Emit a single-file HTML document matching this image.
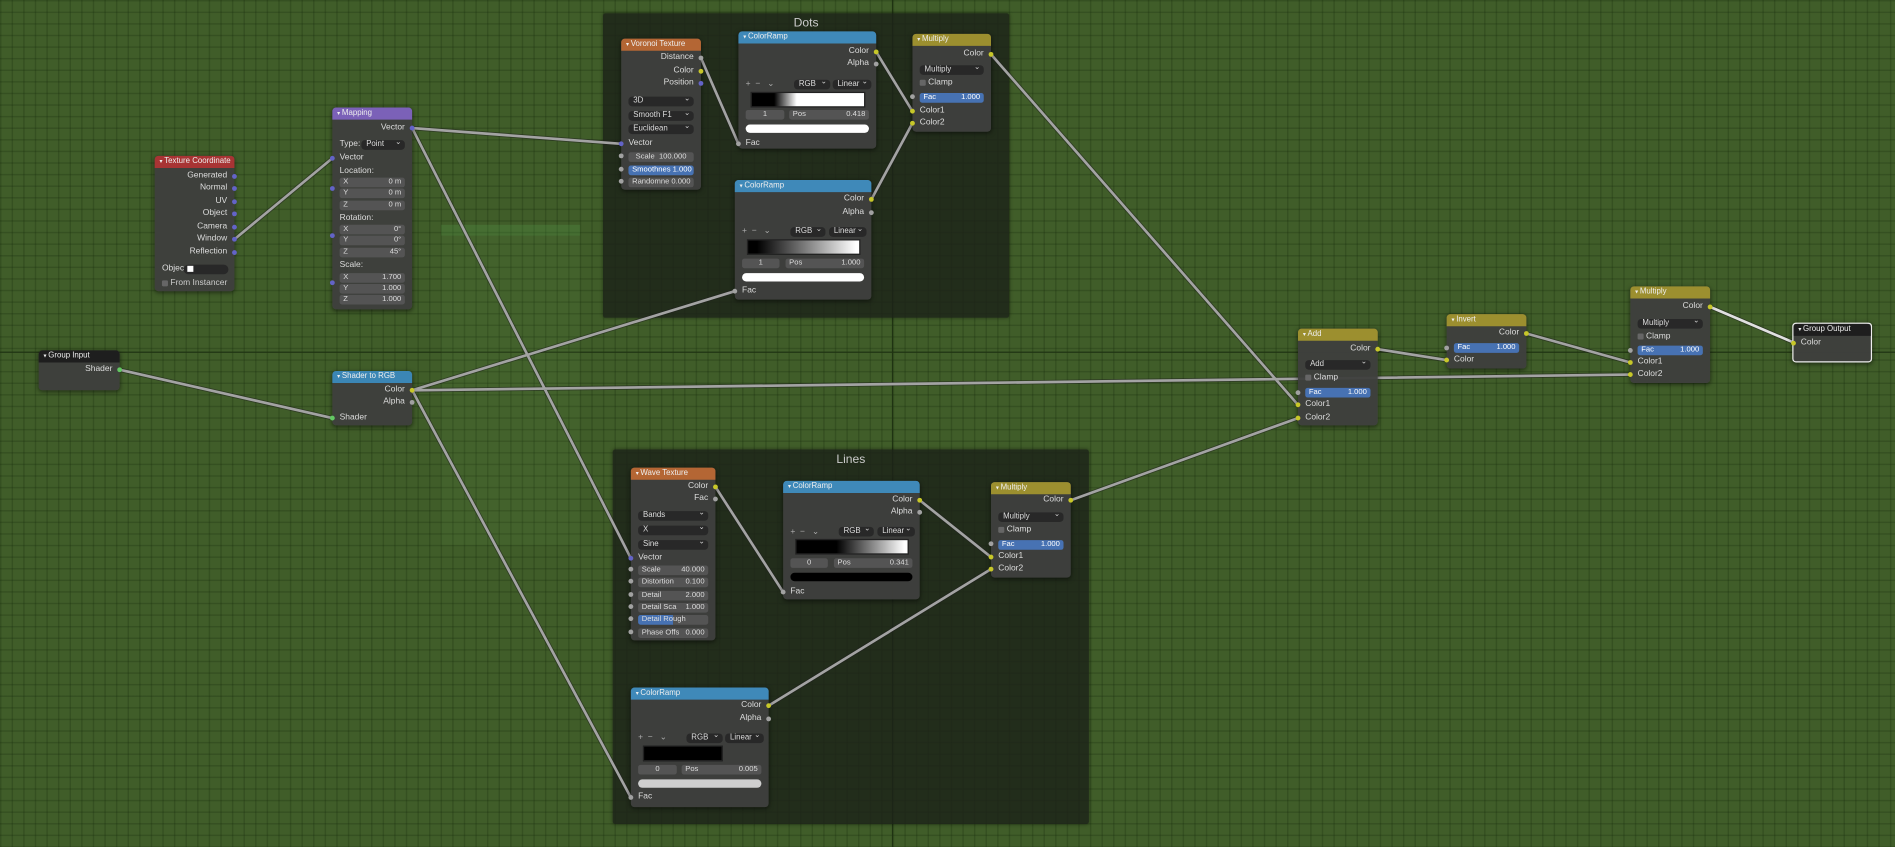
<!DOCTYPE html>
<html><head><meta charset="utf-8"><style>
html,body{margin:0;padding:0;width:1895px;height:847px;overflow:hidden;background:#3e5b28}
#w{position:absolute;left:0;top:0;width:1568px;height:701px;transform:scale(1.20855,1.2083);transform-origin:0 0;
background-color:#405d29;
background-image:linear-gradient(to right,rgba(20,40,10,.25) 1px,transparent 1px),linear-gradient(to bottom,rgba(20,40,10,.25) 1px,transparent 1px);
background-size:9.6px 9.6px;font-family:"Liberation Sans",sans-serif;font-size:7px;color:#ddd}
.ax{position:absolute;background:#1f3312}
.fr{position:absolute;background:rgba(28,34,24,.82);border-radius:2px;box-shadow:0 0 3px rgba(0,0,0,.4)}
.ft{position:absolute;left:0;right:0;top:3px;text-align:center;font-size:10px;color:#ccc}
.n{position:absolute;background:rgba(62,63,61,.96);border-radius:3px;box-shadow:0 1px 4px rgba(0,0,0,.55)}
.h{height:10px;line-height:10px;border-radius:3px 3px 0 0;padding-left:4px;color:#eee;font-size:6.5px;white-space:nowrap;overflow:hidden}
.h:before{content:"▾ ";font-size:5px}
.r{position:absolute;left:6px;right:6px;height:10px;line-height:10px;white-space:nowrap}
.ra{text-align:right}
.s{position:absolute;width:4px;height:4px;border-radius:50%;margin-top:3px}
.sr{right:-2px}.sl{left:-2px}
.y{background:#c7c729}.g{background:#a1a1a1}.p{background:#6363c7}.gr{background:#63c763}
.f{position:absolute;left:6px;right:6px;height:8px;line-height:8px;background:#545454;border-radius:2px;padding:0 3px;white-space:nowrap;overflow:hidden;font-size:6.3px}
.f b{font-weight:normal;float:right}
.bl{background:#4772b3;color:#fff}
.d{position:absolute;left:6px;right:6px;height:8px;line-height:8px;background:#282828;border-radius:3px;padding:0 4px;white-space:nowrap;font-size:6.5px}
.d:after{content:"⌄";position:absolute;right:3px;top:-2px;font-size:6px}
.cb{display:inline-block;width:5px;height:5px;background:#666;border-radius:1px;margin-right:2px;vertical-align:-1px}
.tb{position:absolute;left:6px;right:6px;height:9px;line-height:9px;color:#aaa}
.ramp{position:absolute;left:10px;right:9px;height:11px;border:1px solid #222}
.bar{position:absolute;left:6px;right:6px;height:7px;border-radius:4px}
</style></head><body><div id="w">
<div class="ax" style="left:0;right:0;top:291px;height:1px"></div>
<div class="ax" style="top:0;bottom:0;left:738px;width:1px"></div>

<div class="fr" style="left:499px;top:11px;width:336px;height:252px"><div class="ft">Dots</div></div>
<div class="fr" style="left:507px;top:372px;width:394px;height:310px"><div class="ft">Lines</div></div>
<div style="position:absolute;left:365px;top:186px;width:115px;height:265px;background:rgba(120,170,90,.07)"><div style="height:9px;background:rgba(90,180,90,.15)"></div></div>

<svg style="position:absolute;left:0;top:0" width="1568" height="701">
<g fill="none" stroke-linecap="round">
<g stroke="rgba(30,30,30,.5)" stroke-width="3.6">
<path d="M194 198L275 131M341 106L514 119M341 106L522 462M99 306L275 346M341 323L608 241M341 323L1349 310M341 323L522 660M580 48L611 119M725 43L755 92M721 165L755 102M820 45L1074 335M592 403L648 490M761 414L820 461M636 584L820 471M886 414L1074 346M1140 289L1197 298M1263 276L1349 300M1415 254L1483 283"/></g>
<g stroke="#a3a3a3" stroke-width="2.2">
<path d="M194 198L275 131M341 106L514 119M341 106L522 462M99 306L275 346M341 323L608 241M341 323L1349 310M341 323L522 660M580 48L611 119M725 43L755 92M721 165L755 102M820 45L1074 335M592 403L648 490M761 414L820 461M636 584L820 471M886 414L1074 346M1140 289L1197 298M1263 276L1349 300"/></g>
<path d="M1415 254L1483 283" stroke="#e0e0e0" stroke-width="2.2"/>
</g></svg>

<!-- Texture Coordinate -->
<div class="n" style="left:128px;top:129px;width:66px;height:112px"><div class="h" style="background:#a83434">Texture Coordinate</div>
<div class="r ra" style="top:12px">Generated</div><div class="s sr p" style="top:12px"></div>
<div class="r ra" style="top:22px">Normal</div><div class="s sr p" style="top:22px"></div>
<div class="r ra" style="top:33px">UV</div><div class="s sr p" style="top:33px"></div>
<div class="r ra" style="top:43px">Object</div><div class="s sr p" style="top:43px"></div>
<div class="r ra" style="top:54px">Camera</div><div class="s sr p" style="top:54px"></div>
<div class="r ra" style="top:64px">Window</div><div class="s sr p" style="top:64px"></div>
<div class="r ra" style="top:75px">Reflection</div><div class="s sr p" style="top:75px"></div>
<div class="r" style="top:89px">Objec</div><div style="position:absolute;left:24px;right:5px;top:90px;height:8px;background:#282828;border-radius:4px"><div style="position:absolute;left:3px;top:1px;width:5px;height:5px;background:#fff"></div></div>
<div class="r" style="top:101px;color:#ccc"><span class="cb"></span>From Instancer</div>
</div>

<!-- Mapping -->
<div class="n" style="left:275px;top:89px;width:66px;height:167px"><div class="h" style="background:#7b61b8">Mapping</div>
<div class="r ra" style="top:12px">Vector</div><div class="s sr p" style="top:12px"></div>
<div class="r" style="top:26px">Type:</div><div class="d" style="left:24px;top:27px">Point</div>
<div class="r" style="top:37px">Vector</div><div class="s sl p" style="top:37px"></div>
<div class="r" style="top:48px">Location:</div>
<div class="f" style="top:58px">X<b>0 m</b></div><div class="f" style="top:67px">Y<b>0 m</b></div><div class="f" style="top:77px">Z<b>0 m</b></div>
<div class="s sl p" style="top:62px"></div>
<div class="r" style="top:87px">Rotation:</div>
<div class="f" style="top:97px">X<b>0°</b></div><div class="f" style="top:106px">Y<b>0°</b></div><div class="f" style="top:116px">Z<b>45°</b></div>
<div class="s sl p" style="top:101px"></div>
<div class="r" style="top:126px">Scale:</div>
<div class="f" style="top:137px">X<b>1.700</b></div><div class="f" style="top:146px">Y<b>1.000</b></div><div class="f" style="top:155px">Z<b>1.000</b></div>
<div class="s sl p" style="top:140px"></div>
</div>

<!-- Group Input -->
<div class="n" style="left:32px;top:290px;width:67px;height:33px"><div class="h" style="background:#1e1e1e">Group Input</div>
<div class="r ra" style="top:11px">Shader</div><div class="s sr gr" style="top:11px"></div></div>

<!-- Shader to RGB -->
<div class="n" style="left:275px;top:307px;width:66px;height:45px"><div class="h" style="background:#3b86b5">Shader to RGB</div>
<div class="r ra" style="top:11px">Color</div><div class="s sr y" style="top:11px"></div>
<div class="r ra" style="top:21px">Alpha</div><div class="s sr g" style="top:21px"></div>
<div class="r" style="top:34px">Shader</div><div class="s sl gr" style="top:34px"></div></div>

<!-- Voronoi -->
<div class="n" style="left:514px;top:32px;width:66px;height:125px"><div class="h" style="background:#b46634">Voronoi Texture</div>
<div class="r ra" style="top:11px">Distance</div><div class="s sr g" style="top:11px"></div>
<div class="r ra" style="top:22px">Color</div><div class="s sr y" style="top:22px"></div>
<div class="r ra" style="top:32px">Position</div><div class="s sr p" style="top:32px"></div>
<div class="d" style="top:48px">3D</div><div class="d" style="top:60px">Smooth F1</div><div class="d" style="top:71px">Euclidean</div>
<div class="r" style="top:82px">Vector</div><div class="s sl p" style="top:82px"></div>
<div class="f" style="top:94px;text-align:center">Scale&nbsp;&nbsp;100.000</div><div class="s sl g" style="top:92px"></div>
<div class="f bl" style="top:105px">Smoothnes 1.000</div><div class="s sl g" style="top:103px"></div>
<div class="f" style="top:115px">Randomne 0.000</div><div class="s sl g" style="top:113px"></div>
</div>

<!-- ColorRamp1 -->
<div class="n" style="left:611px;top:26px;width:114px;height:97px"><div class="h" style="background:#3f89b9">ColorRamp</div>
<div class="r ra" style="top:12px">Color</div><div class="s sr y" style="top:12px"></div>
<div class="r ra" style="top:22px">Alpha</div><div class="s sr g" style="top:22px"></div>
<div class="tb" style="top:39px">+&nbsp;&nbsp;−&nbsp;&nbsp;&nbsp;⌄</div><div class="d" style="left:46px;right:38px;top:40px">RGB</div><div class="d" style="left:78px;right:4px;top:40px">Linear</div>
<div class="ramp" style="top:50px;background:linear-gradient(to right,#000 20%,#fff 40%,#fff)"></div>
<div class="f" style="top:65px;right:76px;text-align:center">1</div><div class="f" style="top:65px;left:42px">Pos<b>0.418</b></div>
<div class="bar" style="top:77px;background:#fff"></div>
<div class="r" style="top:88px">Fac</div><div class="s sl g" style="top:88px"></div>
</div>

<!-- Multiply1 -->
<div class="n" style="left:755px;top:28px;width:65px;height:81px"><div class="h" style="background:#9c8f2f">Multiply</div>
<div class="r ra" style="top:12px">Color</div><div class="s sr y" style="top:12px"></div>
<div class="d" style="top:26px">Multiply</div>
<div class="r" style="top:36px"><span class="cb"></span>Clamp</div>
<div class="f bl" style="top:49px">Fac<b>1.000</b></div><div class="s sl g" style="top:47px"></div>
<div class="r" style="top:59px">Color1</div><div class="s sl y" style="top:59px"></div>
<div class="r" style="top:69px">Color2</div><div class="s sl y" style="top:69px"></div>
</div>

<!-- ColorRamp2 -->
<div class="n" style="left:608px;top:149px;width:113px;height:99px"><div class="h" style="background:#3f89b9">ColorRamp</div>
<div class="r ra" style="top:11px">Color</div><div class="s sr y" style="top:11px"></div>
<div class="r ra" style="top:22px">Alpha</div><div class="s sr g" style="top:22px"></div>
<div class="tb" style="top:38px">+&nbsp;&nbsp;−&nbsp;&nbsp;&nbsp;⌄</div><div class="d" style="left:46px;right:38px;top:39px">RGB</div><div class="d" style="left:78px;right:4px;top:39px">Linear</div>
<div class="ramp" style="top:49px;background:linear-gradient(to right,#000 8%,#fff 97%)"></div>
<div class="f" style="top:65px;right:76px;text-align:center">1</div><div class="f" style="top:65px;left:42px">Pos<b>1.000</b></div>
<div class="bar" style="top:77px;background:#fff"></div>
<div class="r" style="top:87px">Fac</div><div class="s sl g" style="top:87px"></div>
</div>

<!-- Wave -->
<div class="n" style="left:522px;top:387px;width:70px;height:143px"><div class="h" style="background:#b46634">Wave Texture</div>
<div class="r ra" style="top:11px">Color</div><div class="s sr y" style="top:11px"></div>
<div class="r ra" style="top:21px">Fac</div><div class="s sr g" style="top:21px"></div>
<div class="d" style="top:36px">Bands</div><div class="d" style="top:48px">X</div><div class="d" style="top:60px">Sine</div>
<div class="r" style="top:70px">Vector</div><div class="s sl p" style="top:70px"></div>
<div class="f" style="top:81px">Scale<b>40.000</b></div><div class="s sl g" style="top:79px"></div>
<div class="f" style="top:91px">Distortion<b>0.100</b></div><div class="s sl g" style="top:89px"></div>
<div class="f" style="top:102px">Detail<b>2.000</b></div><div class="s sl g" style="top:100px"></div>
<div class="f" style="top:112px">Detail Sca<b>1.000</b></div><div class="s sl g" style="top:110px"></div>
<div class="f" style="top:122px;background:linear-gradient(to right,#4772b3 50%,#545454 50%)">Detail Rough<b>0.500</b></div><div class="s sl g" style="top:120px"></div>
<div class="f" style="top:133px">Phase Offs<b>0.000</b></div><div class="s sl g" style="top:131px"></div>
</div>

<!-- ColorRamp3 -->
<div class="n" style="left:648px;top:398px;width:113px;height:98px"><div class="h" style="background:#3f89b9">ColorRamp</div>
<div class="r ra" style="top:11px">Color</div><div class="s sr y" style="top:11px"></div>
<div class="r ra" style="top:21px">Alpha</div><div class="s sr g" style="top:21px"></div>
<div class="tb" style="top:38px">+&nbsp;&nbsp;−&nbsp;&nbsp;&nbsp;⌄</div><div class="d" style="left:46px;right:38px;top:38px">RGB</div><div class="d" style="left:78px;right:4px;top:38px">Linear</div>
<div class="ramp" style="top:48px;background:linear-gradient(to right,#000 36%,#fff 97%)"></div>
<div class="f" style="top:64px;right:76px;text-align:center">0</div><div class="f" style="top:64px;left:42px">Pos<b>0.341</b></div>
<div class="bar" style="top:76px;background:#000"></div>
<div class="r" style="top:87px">Fac</div><div class="s sl g" style="top:87px"></div>
</div>

<!-- Multiply2 -->
<div class="n" style="left:820px;top:399px;width:66px;height:79px"><div class="h" style="background:#9c8f2f">Multiply</div>
<div class="r ra" style="top:10px">Color</div><div class="s sr y" style="top:10px"></div>
<div class="d" style="top:25px">Multiply</div>
<div class="r" style="top:35px"><span class="cb"></span>Clamp</div>
<div class="f bl" style="top:48px">Fac<b>1.000</b></div><div class="s sl g" style="top:46px"></div>
<div class="r" style="top:57px">Color1</div><div class="s sl y" style="top:57px"></div>
<div class="r" style="top:67px">Color2</div><div class="s sl y" style="top:67px"></div>
</div>

<!-- ColorRamp4 -->
<div class="n" style="left:522px;top:569px;width:114px;height:99px"><div class="h" style="background:#3f89b9">ColorRamp</div>
<div class="r ra" style="top:10px">Color</div><div class="s sr y" style="top:10px"></div>
<div class="r ra" style="top:21px">Alpha</div><div class="s sr g" style="top:21px"></div>
<div class="tb" style="top:37px">+&nbsp;&nbsp;−&nbsp;&nbsp;&nbsp;⌄</div><div class="d" style="left:46px;right:38px;top:38px">RGB</div><div class="d" style="left:78px;right:4px;top:38px">Linear</div>
<div class="ramp" style="top:48px;background:#000;right:38px"></div>
<div class="f" style="top:64px;right:76px;text-align:center">0</div><div class="f" style="top:64px;left:42px">Pos<b>0.005</b></div>
<div class="bar" style="top:76px;background:#cfcfcf"></div>
<div class="r" style="top:86px">Fac</div><div class="s sl g" style="top:86px"></div>
</div>

<!-- Add -->
<div class="n" style="left:1074px;top:272px;width:66px;height:80px"><div class="h" style="background:#9c8f2f">Add</div>
<div class="r ra" style="top:12px">Color</div><div class="s sr y" style="top:12px"></div>
<div class="d" style="top:26px">Add</div>
<div class="r" style="top:36px"><span class="cb"></span>Clamp</div>
<div class="f bl" style="top:49px">Fac<b>1.000</b></div><div class="s sl g" style="top:48px"></div>
<div class="r" style="top:58px">Color1</div><div class="s sl y" style="top:58px"></div>
<div class="r" style="top:69px">Color2</div><div class="s sl y" style="top:69px"></div>
</div>

<!-- Invert -->
<div class="n" style="left:1197px;top:260px;width:66px;height:45px"><div class="h" style="background:#9c8f2f">Invert</div>
<div class="r ra" style="top:11px">Color</div><div class="s sr y" style="top:11px"></div>
<div class="f bl" style="top:24px">Fac<b>1.000</b></div><div class="s sl g" style="top:23px"></div>
<div class="r" style="top:33px">Color</div><div class="s sl y" style="top:33px"></div>
</div>

<!-- Multiply3 -->
<div class="n" style="left:1349px;top:237px;width:66px;height:80px"><div class="h" style="background:#9c8f2f">Multiply</div>
<div class="r ra" style="top:12px">Color</div><div class="s sr y" style="top:12px"></div>
<div class="d" style="top:27px">Multiply</div>
<div class="r" style="top:37px"><span class="cb"></span>Clamp</div>
<div class="f bl" style="top:49px">Fac<b>1.000</b></div><div class="s sl g" style="top:48px"></div>
<div class="r" style="top:58px">Color1</div><div class="s sl y" style="top:58px"></div>
<div class="r" style="top:68px">Color2</div><div class="s sl y" style="top:68px"></div>
</div>

<!-- Group Output -->
<div class="n" style="left:1483px;top:267px;width:64px;height:31px;border:1px solid #eee"><div class="h" style="background:#1e1e1e">Group Output</div>
<div class="r" style="top:11px">Color</div><div class="s sl y" style="top:11px"></div></div>
</div></body></html>
